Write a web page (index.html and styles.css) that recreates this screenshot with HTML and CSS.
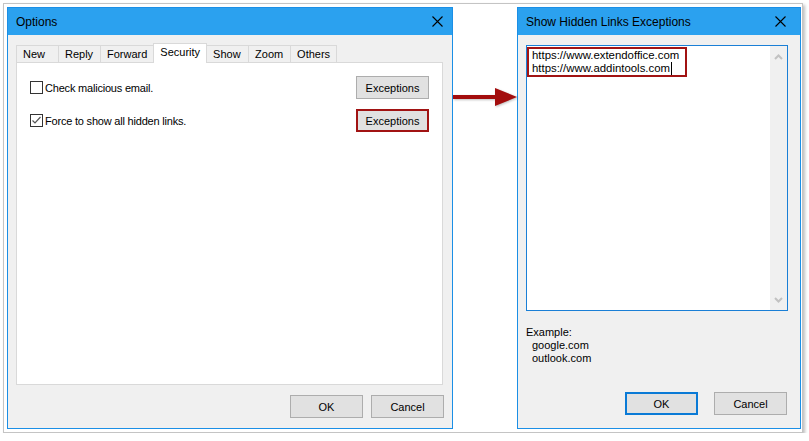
FILE: index.html
```html
<!DOCTYPE html>
<html lang="en">
<head>
  <meta charset="UTF-8">
  <title>Options - Show Hidden Links Exceptions</title>
  <link rel="stylesheet" href="styles.css">
</head>
<body>

<div class="frame">

  <!-- Options dialog -->
  <div class="dialog dialog-options">
    <div class="titlebar">
      <span>Options</span>
      <svg class="close" width="11" height="11" viewBox="0 0 11 11"><path d="M0.5 0.5 L10.5 10.5 M10.5 0.5 L0.5 10.5" stroke="#000" stroke-width="1.1"/></svg>
    </div>
    <div class="dialog-body">
      <div class="tabs">
        <div class="tab">New</div>
        <div class="tab">Reply</div>
        <div class="tab">Forward</div>
        <div class="tab tab-active">Security</div>
        <div class="tab">Show</div>
        <div class="tab">Zoom</div>
        <div class="tab">Others</div>
      </div>
      <div class="panel">
        <div class="row">
          <label class="check"><span class="box"></span>Check malicious email.</label>
          <button class="btn">Exceptions</button>
        </div>
        <div class="row">
          <label class="check">
            <span class="box"><svg width="11" height="11" viewBox="0 0 11 11"><path d="M1.5 5.5 L4 8 L9.5 2" fill="none" stroke="#555" stroke-width="1.2"/></svg></span>Force to show all hidden links.
          </label>
          <button class="btn btn-marked">Exceptions</button>
        </div>
      </div>
      <div class="footer">
        <button class="btn">OK</button>
        <button class="btn">Cancel</button>
      </div>
    </div>
  </div>

  <div class="arrow-col">
    <svg width="64" height="18" viewBox="0 0 64 18"><rect x="0" y="7" width="43" height="4" fill="#a30d0d"/><polygon points="42,0 64,9 42,18" fill="#a30d0d"/></svg>
  </div>

  <!-- Exceptions dialog -->
  <div class="dialog dialog-exceptions">
    <div class="titlebar titlebar-wide">
      <span>Show Hidden Links Exceptions</span>
      <svg class="close" width="11" height="11" viewBox="0 0 11 11"><path d="M0.5 0.5 L10.5 10.5 M10.5 0.5 L0.5 10.5" stroke="#000" stroke-width="1.1"/></svg>
    </div>
    <div class="dialog-body dialog-body-exceptions">
      <div class="textbox">
        <div class="textbox-text">
          <div class="marked-lines">
            https://www.extendoffice.com<br>
            https://www.addintools.com<span class="caret"></span>
          </div>
        </div>
        <div class="scrollbar">
          <svg width="9" height="6" viewBox="0 0 9 6"><path d="M1 5 L4.5 1.5 L8 5" fill="none" stroke="#c2c2c2" stroke-width="2"/></svg>
          <svg width="9" height="6" viewBox="0 0 9 6"><path d="M1 1 L4.5 4.5 L8 1" fill="none" stroke="#c2c2c2" stroke-width="2"/></svg>
        </div>
      </div>
      <div class="example">
        Example:
        <div class="example-item">google.com</div>
        <div class="example-item">outlook.com</div>
      </div>
      <div class="footer footer-bottom">
        <button class="btn btn-default">OK</button>
        <button class="btn">Cancel</button>
      </div>
    </div>
  </div>

</div>

</body>
</html>
```

FILE: styles.css
```css
body {
  margin: 0;
  background: #fff;
  font-family: "Liberation Sans", Arial, sans-serif;
  font-size: 11px;
  color: #000;
}

.frame {
  box-sizing: border-box;
  width: 800px;
  height: 430px;
  margin: 3px 0 0 3px;
  padding: 3px 1px 3px 3px;
  border: 1px solid #c4c4c4;
  box-shadow: 2px 2px 3px rgba(0, 0, 0, 0.25);
  display: flex;
}

.dialog {
  box-sizing: border-box;
  border: 1px solid #1b8fe6;
  background: #f0f0f0;
  display: flex;
  flex-direction: column;
}

.dialog-options {
  width: 446px;
}

.dialog-exceptions {
  width: 284px;
}

.titlebar {
  height: 27px;
  flex: none;
  background: #2ba1ef;
  display: flex;
  align-items: center;
  justify-content: space-between;
  padding: 0 9px 0 8px;
  font-size: 12px;
}

.titlebar-wide {
  padding-right: 14px;
}

.dialog-body {
  flex: 1;
  display: flex;
  flex-direction: column;
  padding: 8px 9px 10px 8px;
}

.dialog-body-exceptions {
  padding: 10px 12px 13px 8px;
}

/* tabs */
.tabs {
  display: flex;
  align-items: flex-end;
  height: 19px;
  flex: none;
}

.tab {
  box-sizing: border-box;
  height: 17px;
  min-width: 43px;
  padding: 0 6px;
  margin-left: -1px;
  border: 1px solid #d9d9d9;
  border-bottom: none;
  background: #f0f0f0;
  line-height: 16px;
}

.tab:first-child {
  margin-left: 0;
}

.tab-active {
  height: 20px;
  margin-bottom: -1px;
  background: #fff;
  line-height: 17px;
  position: relative;
  z-index: 1;
}

.panel {
  flex: 1;
  background: #fff;
  border: 1px solid #d9d9d9;
  padding: 13px 13px 0 13px;
  display: flex;
  flex-direction: column;
  gap: 10px;
}

.row {
  display: flex;
  align-items: center;
  justify-content: space-between;
  height: 23px;
}

.check {
  display: flex;
  align-items: center;
  gap: 2px;
  letter-spacing: -0.2px;
}

.box {
  box-sizing: border-box;
  width: 13px;
  height: 13px;
  border: 1px solid #333;
  background: #fff;
  display: flex;
}

/* buttons */
.btn {
  box-sizing: border-box;
  width: 73px;
  height: 23px;
  padding: 0;
  background: #e1e1e1;
  border: 1px solid #adadad;
  font: inherit;
  color: #000;
}

.btn-marked {
  border: 2px solid #a11313;
}

.btn-default {
  border: 2px solid #0a7ad6;
}

.footer {
  display: flex;
  justify-content: flex-end;
  gap: 8px;
  margin: 10px -1px 0 0;
  flex: none;
}

.footer-bottom {
  margin: auto 1px 0 0;
  gap: 16px;
}

.arrow-col {
  width: 64px;
  flex: none;
  padding-top: 81px;
}

.arrow-col svg {
  display: block;
  filter: drop-shadow(1px 1px 1px rgba(0, 0, 0, 0.25));
}

/* exceptions text box */
.textbox {
  box-sizing: border-box;
  height: 266px;
  flex: none;
  border: 1px solid #1a7fd6;
  background: #fff;
  display: flex;
}

.textbox-text {
  flex: 1;
  padding-top: 1px;
  font-size: 11.4px;
}

.marked-lines {
  display: inline-block;
  border: 2px solid #a11313;
  padding: 0 6px 0 3px;
  line-height: 13px;
}

.caret {
  display: inline-block;
  width: 1px;
  height: 13px;
  margin-left: 1px;
  background: #000;
  vertical-align: -3px;
}

.scrollbar {
  width: 17px;
  background: #f0f0f0;
  display: flex;
  flex-direction: column;
  justify-content: space-between;
  align-items: center;
  padding: 8px 0 7px;
}

.example {
  margin-top: 15px;
  line-height: 13px;
}

.example-item {
  padding-left: 6px;
}
```
